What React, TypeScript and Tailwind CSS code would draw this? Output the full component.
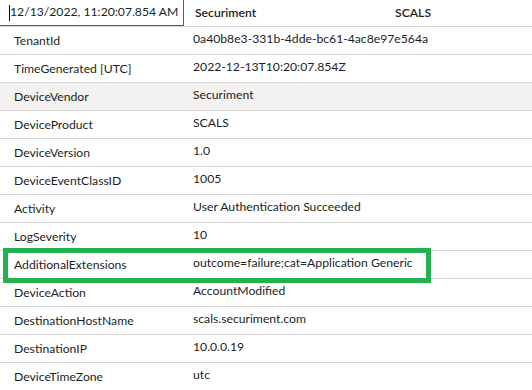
import React from "react";

const rows: [string, string][] = [
  ["TenantId", "0a40b8e3-331b-4dde-bc61-4ac8e97e564a"],
  ["TimeGenerated [UTC]", "2022-12-13T10:20:07.854Z"],
  ["DeviceVendor", "Securiment"],
  ["DeviceProduct", "SCALS"],
  ["DeviceVersion", "1.0"],
  ["DeviceEventClassID", "1005"],
  ["Activity", "User Authentication Succeeded"],
  ["LogSeverity", "10"],
  ["AdditionalExtensions", "outcome=failure;cat=Application Generic"],
  ["DeviceAction", "AccountModified"],
  ["DestinationHostName", "scals.securiment.com"],
  ["DestinationIP", "10.0.0.19"],
  ["DeviceTimeZone", "utc"],
];

export default function App() {
  return (
    <div
      className="relative w-[532px] h-[390px] overflow-hidden bg-white text-[12.2px] text-[#201f1e] whitespace-nowrap"
      style={{ fontFamily: 'Lato, "Noto Sans", sans-serif' }}
    >
      <div className="flex h-[27px] border-b border-[#d6d6d6]">
        <div className="relative flex items-center w-[184px] h-[26px] border-r border-b border-[#5f5f5f] pl-[10px]">
          <span className="absolute left-[9px] top-[5px] w-px h-[16px] bg-black" />
          <span>12/13/2022, 11:20:07.854 AM</span>
        </div>
        <div className="flex items-center pl-[11px] w-[200px] font-semibold">Securiment</div>
        <div className="flex items-center pl-[11px] font-semibold">SCALS</div>
      </div>
      {rows.map(([k, v], i) => (
        <div
          key={k}
          className={`flex h-[28px] border-b border-[#d6d6d6] ${i === 2 ? "bg-[#f3f2f1]" : ""}`}
        >
          <div className="w-[193px] pl-[14px] pt-[5px]">{k}</div>
          <div className="pt-[3px]">{v}</div>
        </div>
      ))}
      <div className="absolute left-[3px] top-[248px] w-[428px] h-[35px] border-[5px] border-[#22b14c]" />
    </div>
  );
}
